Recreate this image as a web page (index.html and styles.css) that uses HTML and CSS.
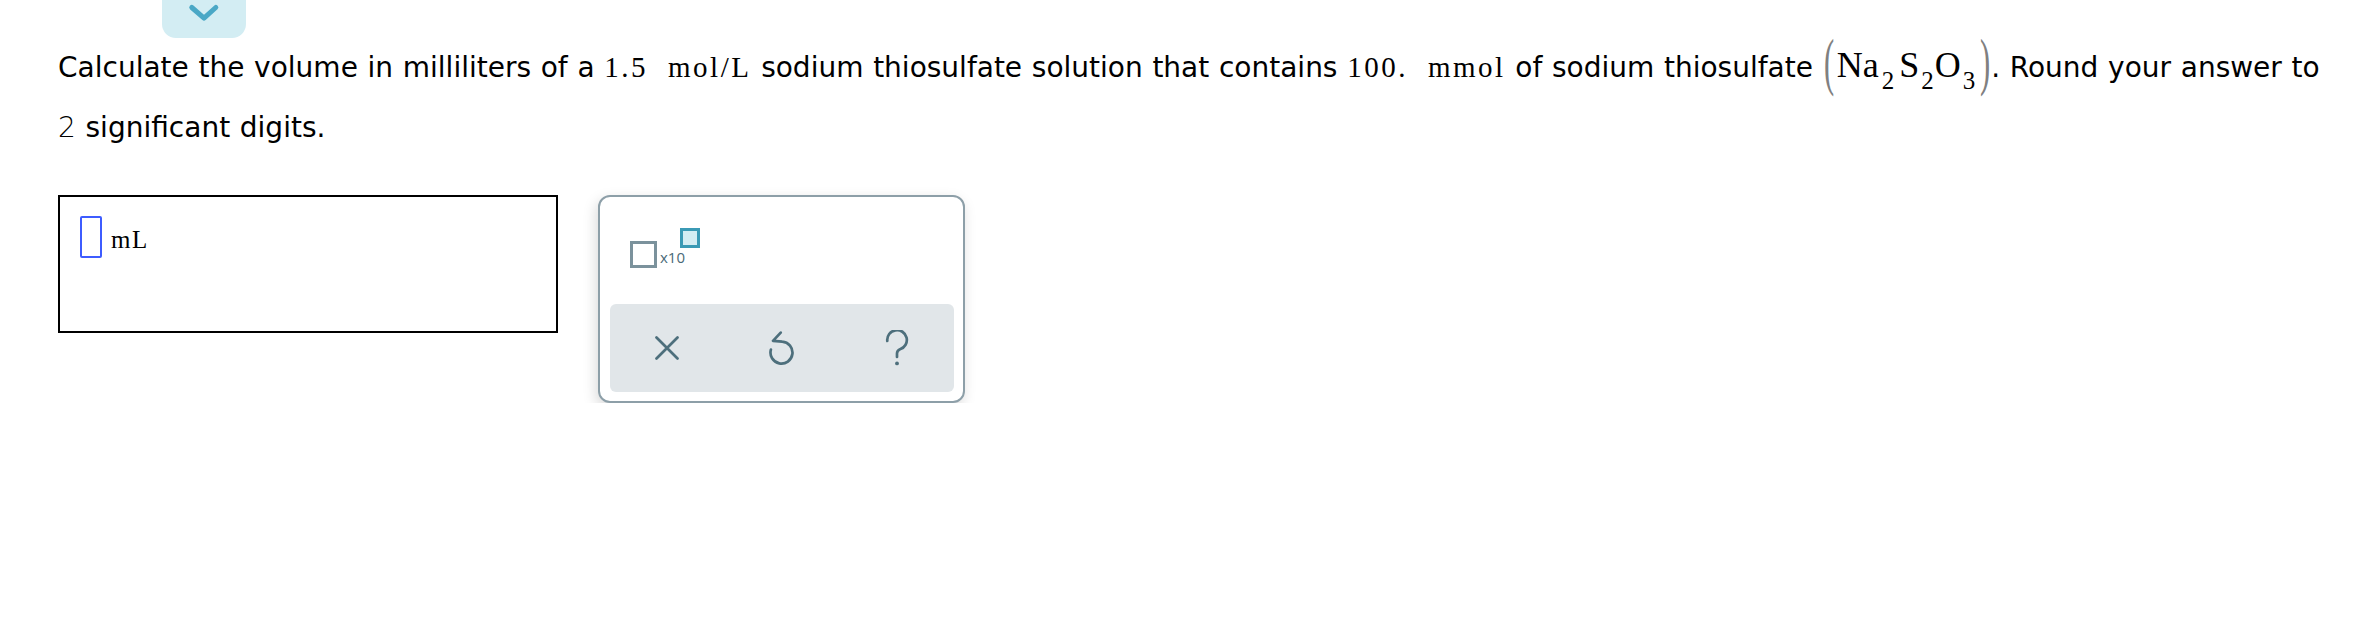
FILE: index.html
```html
<!DOCTYPE html>
<html>
<head>
<meta charset="utf-8">
<link rel="stylesheet" href="styles.css">
</head>
<body>
<div class="page">
  <div class="tab">
    <svg width="84" height="38" viewBox="0 0 84 38"><path d="M29.8 7.5 L42 18.2 L53.8 7.5" fill="none" stroke="#4aa8c6" stroke-width="5" stroke-linecap="round" stroke-linejoin="round"/></svg>
  </div>
  <p class="question">Calculate the volume in milliliters of a <span class="math">1.5</span><span class="math unit-gap">mol/L</span> sodium thiosulfate solution that contains <span class="math">100.</span><span class="math unit-gap">mmol</span> of sodium thiosulfate <span class="formula"><span class="paren lp">(</span><span class="el">Na</span><sub class="s1">2</sub><span class="el s-el">S</span><sub class="s2">2</sub><span class="el o-el">O</span><sub class="s3">3</sub><span class="paren rp">)</span></span>. Round your answer to<br><span class="lead-num">2</span> significant digits.</p>
  <div class="answer-row">
    <div class="answer-box">
      <span class="input-slot"></span>
      <span class="unit">mL</span>
    </div>
    <div class="tools">
      <div class="tool-top">
        <span class="sq-big"></span>
        <span class="x10">x10</span>
        <span class="sq-small"></span>
      </div>
      <div class="tool-bar">
        <div class="tool-btn">
          <svg width="24" height="24" viewBox="0 0 24 24"><path d="M1.5 1.5 L22.5 22.5 M22.5 1.5 L1.5 22.5" stroke="#4d6f7c" stroke-width="2.7" stroke-linecap="round" fill="none"/></svg>
        </div>
        <div class="tool-btn">
          <svg width="27" height="34" viewBox="0 0 27 34"><path d="M12.7 1.6 L5 9.8 L14.2 10.6 A11 11 0 1 1 2.9 18.6" stroke="#4d6f7c" stroke-width="2.7" stroke-linecap="round" stroke-linejoin="round" fill="none"/></svg>
        </div>
        <div class="tool-btn">
          <svg width="24" height="37" viewBox="0 0 24 37"><path d="M2.3 11 A9.8 9.8 0 1 1 15 19.3 C13 20.2 12 21.6 12 23.6 V27" stroke="#4d6f7c" stroke-width="2.7" stroke-linecap="round" stroke-linejoin="round" fill="none"/><circle cx="12" cy="33.4" r="1.9" fill="#4d6f7c"/></svg>
        </div>
      </div>
    </div>
  </div>
</div>
</body>
</html>
```
FILE: styles.css
```css
body {
  margin: 0;
  background: #fff;
  font-family: "DejaVu Sans", Verdana, sans-serif;
  color: #000;
}
.page {
  padding-left: 58px;
}
.tab {
  margin-left: 104px;
  width: 84px;
  height: 38px;
  background: #d3edf3;
  border-radius: 0 0 14px 14px;
}
.tab svg {
  display: block;
}
.question {
  margin: 0;
  font-size: 28px;
  line-height: 60px;
  word-spacing: 0.8px;
  white-space: nowrap;
}
.math {
  font-family: "Liberation Serif", "Times New Roman", serif;
  font-size: 29px;
  line-height: 1;
  letter-spacing: 2.5px;
  word-spacing: 0;
}
.unit-gap {
  margin-left: 20px;
}
.formula {
  font-family: "Liberation Serif", "Times New Roman", serif;
  font-size: 36px;
  line-height: 1;
  word-spacing: 0;
}
.paren {
  display: inline-block;
  color: #808080;
  line-height: 36px;
  transform: scale(0.85, 1.75);
  transform-origin: 50% 60%;
}
.lp { margin-right: 2px; }
.formula sub {
  font-size: 25px;
  vertical-align: -12px;
  line-height: 0;
}
.s1 { margin-left: 3px; }
.s-el { margin-left: 5px; }
.s2 { margin-left: 2px; }
.o-el { margin-left: 1px; }
.s3 { margin-left: 2px; }
.rp { margin-left: 4px; }
.lead-num {
  font-weight: 200;
}
.answer-row {
  display: flex;
  align-items: flex-start;
  gap: 40px;
  margin-top: 37px;
}
.answer-box {
  box-sizing: border-box;
  width: 500px;
  height: 138px;
  border: 2px solid #000;
  padding: 19px 0 0 20px;
  display: flex;
  align-items: flex-start;
}
.input-slot {
  box-sizing: border-box;
  width: 22px;
  height: 42px;
  border: 2px solid #3d5cff;
  border-radius: 2px;
}
.unit {
  font-family: "Liberation Serif", "Times New Roman", serif;
  font-size: 25px;
  line-height: 24px;
  letter-spacing: 1.5px;
  margin: 12px 0 0 9px;
}
.tools {
  box-sizing: border-box;
  width: 367px;
  height: 208px;
  border: 2px solid #8d9fa8;
  border-radius: 12px;
  background: #fff;
  box-shadow: -2px 5px 14px rgba(0, 0, 0, 0.15);
  display: flex;
  flex-direction: column;
}
.tool-top {
  display: flex;
  align-items: flex-end;
  height: 40px;
  padding: 31px 0 0 30px;
}
.sq-big {
  box-sizing: border-box;
  width: 27px;
  height: 27px;
  border: 3px solid #7b929c;
}
.x10 {
  font-family: "Open Sans", sans-serif;
  font-size: 15px;
  line-height: 15px;
  color: #4a6a77;
  margin: 0 0 3px 3px;
}
.sq-small {
  box-sizing: border-box;
  align-self: flex-start;
  width: 20px;
  height: 20px;
  border: 3px solid #3b9ab5;
  background: #d4edf3;
  margin-left: -5px;
}
.tool-bar {
  margin: 36px 9px 9px 10px;
  height: 88px;
  background: #e1e6e9;
  border-radius: 6px;
  display: grid;
  grid-template-columns: repeat(3, 1fr);
  align-items: center;
  justify-items: center;
}
.tool-btn {
  display: flex;
  align-items: center;
  justify-content: center;
}
.tool-btn svg {
  display: block;
}
```
